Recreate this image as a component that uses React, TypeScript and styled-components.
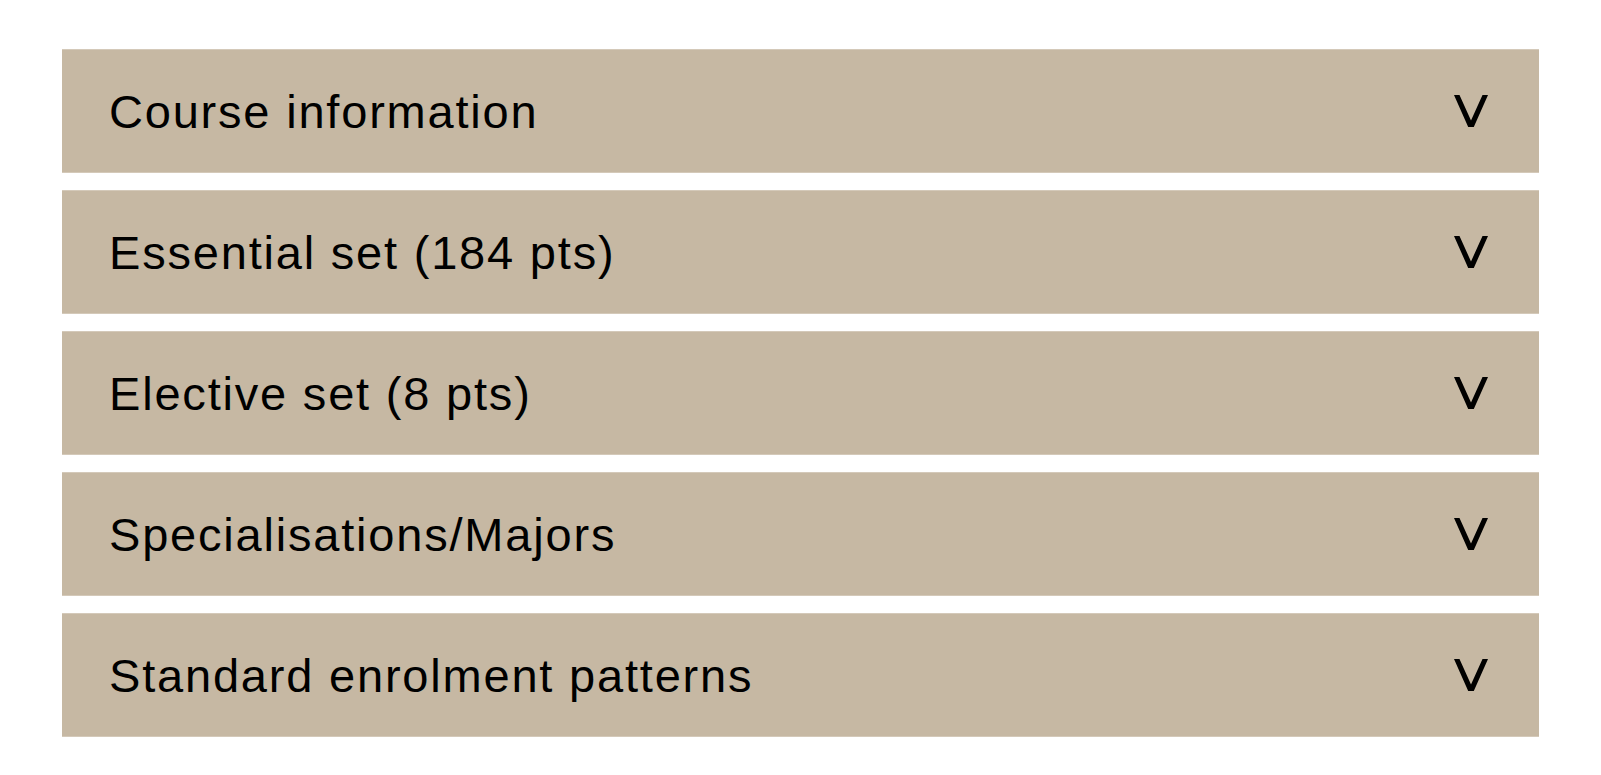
import styled, { createGlobalStyle } from "styled-components";

const GlobalStyle = createGlobalStyle`
  html, body {
    margin: 0;
    padding: 0;
    background: #ffffff;
  }
`;

const Page = styled.div`
  display: flex;
  flex-direction: column;
  gap: 17px;
  padding: 49px 62px 38px;
`;

const Panel = styled.button`
  display: flex;
  justify-content: space-between;
  align-items: center;
  box-sizing: border-box;
  width: 100%;
  height: 124px;
  padding: 0 51px 0 47px;
  border: none;
  border-top: 1px solid #d4c9b9;
  border-bottom: 1px solid #d4c9b9;
  background-color: #c6b8a3;
  cursor: pointer;
  text-align: left;
`;

const Title = styled.span`
  font-family: "Liberation Sans", Arial, sans-serif;
  font-size: 47px;
  letter-spacing: 1.8px;
  color: #000000;
`;

const Chevron = () => (
  <svg width="34" height="32" viewBox="0 0 34 32">
    <polygon points="0,0 5.5,0 17,25.5 28.5,0 34,0 19.8,32 14.2,32" fill="#000" />
  </svg>
);

const sections = [
  "Course information",
  "Essential set (184 pts)",
  "Elective set (8 pts)",
  "Specialisations/Majors",
  "Standard enrolment patterns",
];

const App = () => {
  return (
    <>
      <GlobalStyle />
      <Page>
        {sections.map(title => (
          <Panel key={title}>
            <Title>{title}</Title>
            <Chevron />
          </Panel>
        ))}
      </Page>
    </>
  );
};

export default App;
